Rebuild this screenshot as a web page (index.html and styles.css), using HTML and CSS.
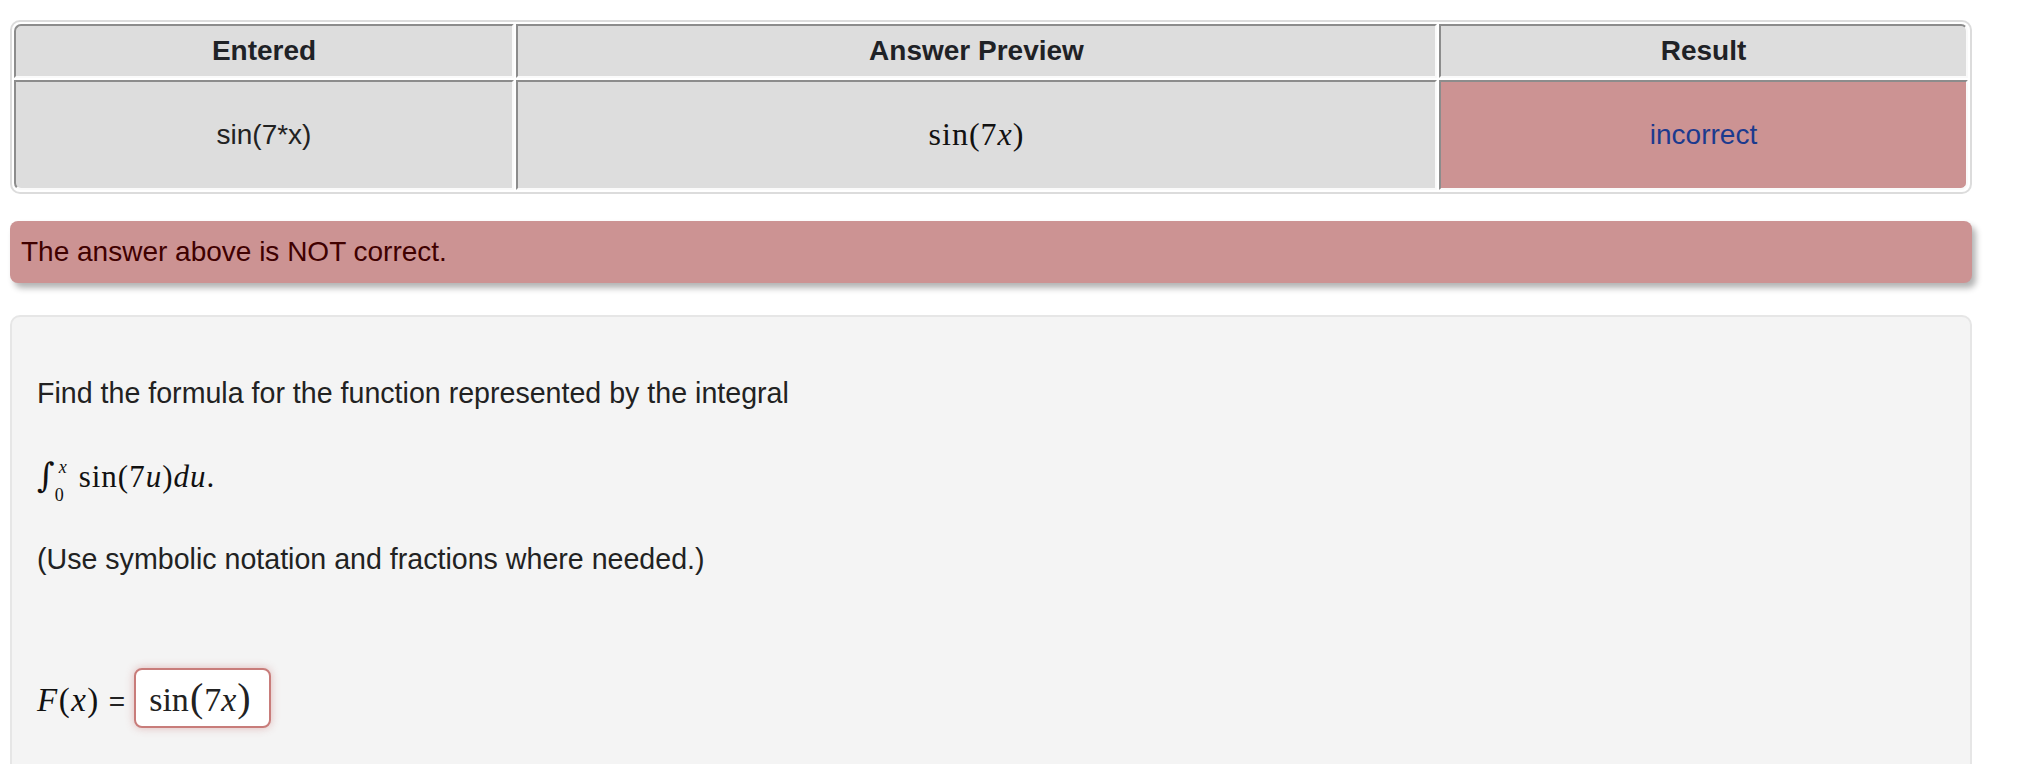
FILE: index.html
```html
<!DOCTYPE html>
<html lang="en">
<head>
    <meta charset="UTF-8">
    <meta name="viewport" content="width=device-width, initial-scale=1.0">
    <title>Answer Results</title>
    <link rel="stylesheet" href="styles.css">
</head>
<body>
    <div class="page">
        <table class="attempt-results">
            <colgroup>
                <col class="col-entered">
                <col class="col-preview">
                <col class="col-result">
            </colgroup>
            <tr>
                <th>Entered</th>
                <th>Answer Preview</th>
                <th>Result</th>
            </tr>
            <tr>
                <td>sin(7*x)</td>
                <td><span class="tex">sin(7<i>x</i>)</span></td>
                <td class="result-error">incorrect</td>
            </tr>
        </table>

        <div class="alert-error">The answer above is NOT correct.</div>

        <div class="problem">
            <p>Find the formula for the function represented by the integral</p>
            <p class="tex-line">
                <span class="integral">∫</span><span class="limits"><span class="upper">x</span><span class="lower">0</span></span>
                <span class="tex">sin(7<i>u</i>)<i>du</i>.</span>
            </p>
            <p class="note">(Use symbolic notation and fractions where needed.)</p>
            <div class="answer-row">
                <span class="tex fx"><i>F</i>(<i>x</i>)</span>
                <span class="equals">=</span>
                <span class="answer-box">sin<span class="paren">(</span>7<i>x</i><span class="paren">)</span></span>
            </div>
        </div>
    </div>
</body>
</html>
```

FILE: styles.css
```css
body {
    margin: 0;
    background: #fff;
    color: #222;
    font-family: "Liberation Sans", Arial, sans-serif;
    font-size: 28px;
}
.page {
    box-sizing: border-box;
    height: 764px;
    overflow: hidden;
    padding: 20px 52px 0 10px;
}
.attempt-results {
    width: 1962px;
    table-layout: fixed;
    border-collapse: separate;
    border-spacing: 2px;
    border: 2px solid #dcdcdc;
    border-radius: 10px;
}
.col-entered { width: 500px; }
.col-preview { width: 921px; }
.col-result { width: 529px; }
.attempt-results th,
.attempt-results td {
    background: #dddddd;
    border: 2px solid;
    border-color: #8c8c8c #fafafa #fafafa #8c8c8c;
    text-align: center;
    line-height: 40px;
}
.attempt-results th {
    padding: 5px 10px;
    font-weight: bold;
    color: #1f2226;
}
.attempt-results td {
    padding: 32px 10px;
}
.attempt-results tr:first-child th:first-child { border-top-left-radius: 7px; }
.attempt-results tr:first-child th:last-child { border-top-right-radius: 7px; }
.attempt-results tr:last-child td:first-child { border-bottom-left-radius: 7px; }
.attempt-results tr:last-child td:last-child { border-bottom-right-radius: 7px; }
.attempt-results td.result-error {
    background: #cc9393;
    color: #1b3a8e;
}
.tex {
    font-family: "Liberation Serif", "DejaVu Serif", serif;
    font-size: 32px;
    letter-spacing: 1px;
    color: #111;
}
.tex i {
    font-style: italic;
}
.alert-error {
    margin-top: 27px;
    padding: 11px 11px;
    line-height: 40px;
    background: #cc9393;
    color: #400000;
    border-radius: 8px;
    box-shadow: 4px 5px 6px rgba(0, 0, 0, 0.3);
}
.problem {
    margin-top: 32px;
    min-height: 520px;
    padding: 56px 25px 0;
    background: #f4f4f4;
    border: 2px solid #e6e6e6;
    border-radius: 10px;
}
.problem p {
    margin: 0;
    line-height: 40px;
    font-size: 28.6px;
}
.problem .tex-line {
    margin-top: 40px;
    height: 40px;
}
.integral {
    font-family: "DejaVu Serif", serif;
    font-size: 34px;
    color: #111;
}
.limits {
    display: inline-flex;
    flex-direction: column;
    font-family: "Liberation Serif", serif;
    font-size: 18px;
    line-height: 28px;
    vertical-align: 14px;
    margin-right: 4px;
    color: #111;
}
.limits .upper {
    font-style: italic;
    margin-left: 4px;
}
.limits .lower {
    margin-left: 0;
}
.problem .tex-line .tex {
    font-size: 31px;
}
.problem .note {
    margin-top: 46px;
}
.answer-row {
    display: flex;
    align-items: baseline;
    margin-top: 89px;
}
.fx {
    font-size: 33px;
    letter-spacing: 1.5px;
}
.equals {
    margin: 0 9px;
}
.answer-box {
    box-sizing: border-box;
    height: 60px;
    padding: 0 17px 0 13px;
    background: #fff;
    border: 2px solid #c87c7a;
    border-radius: 8px;
    box-shadow: 0 0 8px rgba(200, 110, 110, 0.45);
    font-family: "Liberation Serif", serif;
    font-size: 34px;
    line-height: 56px;
    color: #222;
}
.answer-box .paren {
    font-size: 40px;
    padding: 0 1px;
}
```
